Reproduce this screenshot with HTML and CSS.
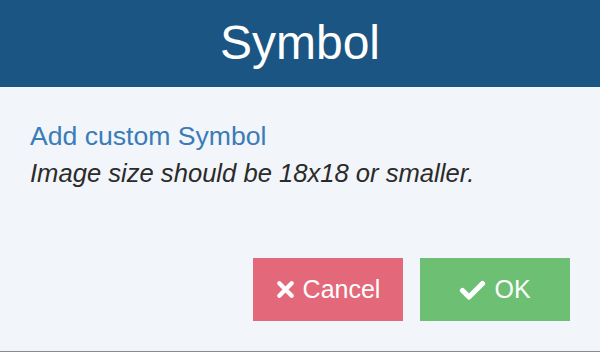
FILE: index.html
```html
<!DOCTYPE html>
<html>
<head>
<meta charset="utf-8">
<link rel="stylesheet" href="styles.css">
</head>
<body>
<div class="modal">
  <div class="modal-header">Symbol</div>
  <div class="modal-body">
    <div class="link">Add custom Symbol</div>
    <div class="hint">Image size should be 18x18 or smaller.</div>
  </div>
  <div class="modal-footer">
    <button class="btn btn-cancel">
      <svg class="icon icon-x" viewBox="0 0 20 20" width="19" height="19"><path d="M3.5 3.5L16.5 16.5M16.5 3.5L3.5 16.5" stroke="#fff" stroke-width="4.6" stroke-linecap="round" fill="none"/></svg>
      <span>Cancel</span>
    </button>
    <button class="btn btn-ok">
      <svg class="icon icon-check" viewBox="0 0 27 20" width="27" height="20"><path d="M3.5 10.5L10 17L23.5 3.5" stroke="#fff" stroke-width="5.2" stroke-linecap="round" stroke-linejoin="round" fill="none"/></svg>
      <span>OK</span>
    </button>
  </div>
</div>
</body>
</html>
```
FILE: styles.css
```css
html, body {
  margin: 0;
  padding: 0;
}
body {
  background: #f2f5f9;
  font-family: "Liberation Sans", Arial, sans-serif;
  width: 600px;
  height: 352px;
  overflow: hidden;
}
.modal {
  height: 351px;
  border-bottom: 1px solid #8a8a8a;
  display: flex;
  flex-direction: column;
}
.modal-header {
  height: 87px;
  background: #1b5583;
  color: #fff;
  font-size: 48px;
  display: flex;
  align-items: center;
  justify-content: center;
  padding-bottom: 2px;
  box-sizing: border-box;
}
.modal-body {
  padding: 31px 30px 0 30px;
  font-size: 26px;
  line-height: 37px;
}
.link {
  color: #3a7cb8;
  font-size: 26.6px;
}
.hint {
  color: #2b2b2b;
  font-style: italic;
  font-size: 25.6px;
}
.modal-footer {
  margin-top: auto;
  margin-bottom: 30px;
  display: flex;
  justify-content: flex-end;
  gap: 17px;
  padding-right: 30px;
}
.btn {
  width: 150px;
  height: 63px;
  border: none;
  border-radius: 0;
  color: #fff;
  font-family: "Liberation Sans", Arial, sans-serif;
  font-size: 25px;
  display: flex;
  align-items: center;
  justify-content: center;
  gap: 8px;
  padding: 0;
}
.btn-cancel {
  background: #e3687a;
}
.btn-ok {
  background: #6cbf73;
}
.icon {
  display: block;
}
```
